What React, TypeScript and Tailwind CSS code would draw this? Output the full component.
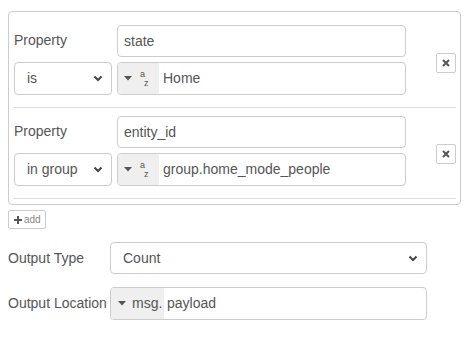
import React from 'react';

const font = { fontFamily: '"Liberation Sans", Arial, sans-serif' };

const Chevron = () => (
  <svg width="10" height="7" viewBox="0 0 10 7" className="shrink-0">
    <path d="M1.5 1.5 L5 5 L8.5 1.5" fill="none" stroke="#444" strokeWidth="2" />
  </svg>
);

const Caret = () => (
  <svg width="8" height="5" viewBox="0 0 8 5" className="shrink-0">
    <path d="M0 0 L8 0 L4 4.5 Z" fill="#555" />
  </svg>
);

const SelectBox = ({ value, className }: { value: string; className: string }) => (
  <div className={`flex items-center justify-between border border-[#ccc] rounded-[4px] bg-white pl-[12px] pr-[8px] text-[14px] text-[#555] ${className}`}>
    <span>{value}</span>
    <Chevron />
  </div>
);

const TextBox = ({ value }: { value: string }) => (
  <div className="flex items-center h-[32px] border border-[#ccc] rounded-[4px] bg-white px-[6px] text-[14px] text-[#555] w-[289px]">
    {value}
  </div>
);

const TypedBox = ({ value }: { value: string }) => (
  <div className="flex items-stretch h-[33px] w-[289px] border border-[#ccc] rounded-[4px] bg-white overflow-hidden text-[14px] text-[#555]">
    <div className="flex items-center gap-[8px] bg-[#efefef] pl-[6px] pr-[4px] w-[41px]">
      <Caret />
      <span className="relative w-[12px] h-[20px] text-[9px] leading-none">
        <span className="absolute left-0 top-[1px]">a</span>
        <span className="absolute left-[4px] top-[10px]">z</span>
      </span>
    </div>
    <div className="flex items-center pl-[4px]">{value}</div>
  </div>
);

const DeleteButton = () => (
  <div className="flex items-center justify-center w-[20px] h-[20px] border border-[#ccc] rounded-[2px] bg-white mt-[5px]">
    <svg width="8" height="8" viewBox="0 0 8 8">
      <path d="M1 1 L7 7 M7 1 L1 7" stroke="#555" strokeWidth="2" />
    </svg>
  </div>
);

const RuleRow = ({ op, prop, val, first }: { op: string; prop: string; val: string; first?: boolean }) => (
  <div className={`flex items-center border-b border-[#ddd] pl-[1px] pb-[12px] ${first ? 'pt-[9px]' : 'pt-[8px]'}`}>
    <div className="flex flex-col gap-[5px]">
      <div className="flex items-center">
        <div className="w-[103px] text-[14px] text-[#555] -mt-[1px]">Property</div>
        <TextBox value={prop} />
      </div>
      <div className="flex items-center gap-[5px]">
        <SelectBox value={op} className="w-[98px] h-[33px]" />
        <TypedBox value={val} />
      </div>
    </div>
    <div className="ml-[30px]">
      <DeleteButton />
    </div>
  </div>
);

export default function App() {
  return (
    <div className="w-[474px] h-[347px] bg-white pt-[11px] pl-[8px]" style={font}>
      <div className="w-[453px] border border-[#ccc] rounded-[4px] pt-[4px] pb-[5px] px-[4px]">
        <RuleRow first prop="state" op="is" val="Home" />
        <RuleRow prop="entity_id" op="in group" val="group.home_mode_people" />
      </div>
      <div className="mt-[5px] flex items-center gap-[2px] w-[38px] h-[19px] border border-[#ccc] rounded-[2px] pl-[5px] text-[10px] text-[#888]">
        <svg width="8" height="8" viewBox="0 0 8 8">
          <path d="M4 0 V8 M0 4 H8" stroke="#555" strokeWidth="2" />
        </svg>
        <span>add</span>
      </div>
      <div className="mt-[13px] flex items-center">
        <div className="w-[102px] text-[14px] text-[#555]">Output Type</div>
        <SelectBox value="Count" className="w-[317px] h-[32px]" />
      </div>
      <div className="mt-[13px] flex items-center">
        <div className="w-[102px] text-[14px] text-[#555]">Output Location</div>
        <div className="flex items-stretch w-[317px] h-[33px] border border-[#ccc] rounded-[4px] overflow-hidden text-[14px] text-[#555]">
          <div className="flex items-center gap-[6px] bg-[#efefef] pl-[7px] w-[53px]">
            <Caret />
            <span>msg.</span>
          </div>
          <div className="flex items-center pl-[3px]">payload</div>
        </div>
      </div>
    </div>
  );
}
